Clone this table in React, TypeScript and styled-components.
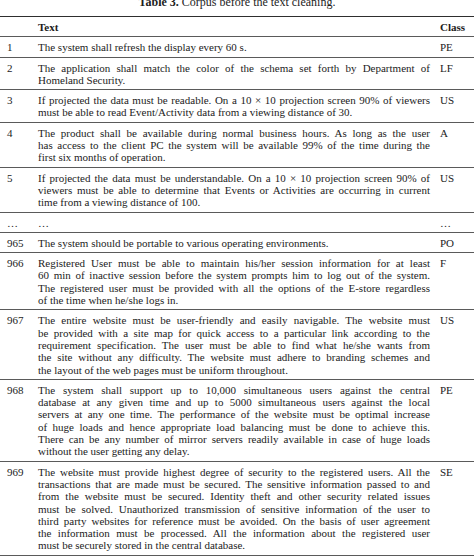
import React from "react";
import styled, { createGlobalStyle } from "styled-components";

const Global = createGlobalStyle`
  html, body {
    margin: 0;
    padding: 0;
    background: #ffffff;
  }
  body {
    font-family: "Liberation Serif", "DejaVu Serif", serif;
    color: #1c1c1c;
    overflow: hidden;
  }
`;

type Fila = {
  id: string;
  lineas: string[];
  clase: string;
};

// las líneas siguen el corte del original
const filas: Fila[] = [
  { id: "1", lineas: ["The system shall refresh the display every 60 s."], clase: "PE" },
  {
    id: "2",
    lineas: [
      "The application shall match the color of the schema set forth by Department of",
      "Homeland Security.",
    ],
    clase: "LF",
  },
  {
    id: "3",
    lineas: [
      "If projected the data must be readable. On a 10 × 10 projection screen 90% of viewers",
      "must be able to read Event/Activity data from a viewing distance of 30.",
    ],
    clase: "US",
  },
  {
    id: "4",
    lineas: [
      "The product shall be available during normal business hours. As long as the user",
      "has access to the client PC the system will be available 99% of the time during the",
      "first six months of operation.",
    ],
    clase: "A",
  },
  {
    id: "5",
    lineas: [
      "If projected the data must be understandable. On a 10 × 10 projection screen 90% of",
      "viewers must be able to determine that Events or Activities are occurring in current",
      "time from a viewing distance of 100.",
    ],
    clase: "US",
  },
  { id: "…", lineas: ["…"], clase: "…" },
  {
    id: "965",
    lineas: ["The system should be portable to various operating environments."],
    clase: "PO",
  },
  {
    id: "966",
    lineas: [
      "Registered User must be able to maintain his/her session information for at least",
      "60 min of inactive session before the system prompts him to log out of the system.",
      "The registered user must be provided with all the options of the E-store regardless",
      "of the time when he/she logs in.",
    ],
    clase: "F",
  },
  {
    id: "967",
    lineas: [
      "The entire website must be user-friendly and easily navigable. The website must",
      "be provided with a site map for quick access to a particular link according to the",
      "requirement specification. The user must be able to find what he/she wants from",
      "the site without any difficulty. The website must adhere to branding schemes and",
      "the layout of the web pages must be uniform throughout.",
    ],
    clase: "US",
  },
  {
    id: "968",
    lineas: [
      "The system shall support up to 10,000 simultaneous users against the central",
      "database at any given time and up to 5000 simultaneous users against the local",
      "servers at any one time. The performance of the website must be optimal increase",
      "of huge loads and hence appropriate load balancing must be done to achieve this.",
      "There can be any number of mirror servers readily available in case of huge loads",
      "without the user getting any delay.",
    ],
    clase: "PE",
  },
  {
    id: "969",
    lineas: [
      "The website must provide highest degree of security to the registered users. All the",
      "transactions that are made must be secured. The sensitive information passed to and",
      "from the website must be secured. Identity theft and other security related issues",
      "must be solved. Unauthorized transmission of sensitive information of the user to",
      "third party websites for reference must be avoided. On the basis of user agreement",
      "the information must be processed. All the information about the registered user",
      "must be securely stored in the central database.",
    ],
    clase: "SE",
  },
];

const Pagina = styled.div`
  width: 474px;
  height: 558px;
  overflow: hidden;
  font-size: 11px;
  line-height: 12.3px;
`;

const Titulo = styled.div`
  margin-top: -4px;
  height: 13px;
  text-align: center;
  font-size: 12px;
  line-height: 12px;

  b {
    font-weight: bold;
  }
`;

const Tabla = styled.div`
  margin-top: 7px;
  border-top: 1.5px solid #2e2e2e;
`;

const FilaTabla = styled.div<{ $cabecera?: boolean }>`
  display: grid;
  grid-template-columns: 38px 392px 1fr;
  padding: 4px 0 3px;
  border-bottom: 1px solid #5a5a5a;
  font-weight: ${(p) => (p.$cabecera ? "bold" : "normal")};
`;

const Celda = styled.div`
  min-width: 0;
`;

const CeldaId = styled(Celda)`
  padding-left: 7px;
`;

const CeldaTexto = styled(Celda)`
  hyphens: none;
`;

const Linea = styled.div<{ $ultima: boolean }>`
  text-align: justify;
  text-align-last: ${(p) => (p.$ultima ? "left" : "justify")};
`;

const CeldaClase = styled(Celda)`
  padding-left: 10px;
`;

export default function App() {
  return (
    <>
      <Global />
      <Pagina>
        <Titulo>
          <b>Table 3.</b> Corpus before the text cleaning.
        </Titulo>
        <Tabla>
          <FilaTabla $cabecera>
            <CeldaId />
            <CeldaTexto>Text</CeldaTexto>
            <CeldaClase>Class</CeldaClase>
          </FilaTabla>
          {filas.map((f, i) => (
            <FilaTabla key={i}>
              <CeldaId>{f.id}</CeldaId>
              <CeldaTexto>
                {f.lineas.map((l, j) => (
                  <Linea key={j} $ultima={j === f.lineas.length - 1}>
                    {l}
                  </Linea>
                ))}
              </CeldaTexto>
              <CeldaClase>{f.clase}</CeldaClase>
            </FilaTabla>
          ))}
        </Tabla>
      </Pagina>
    </>
  );
}
